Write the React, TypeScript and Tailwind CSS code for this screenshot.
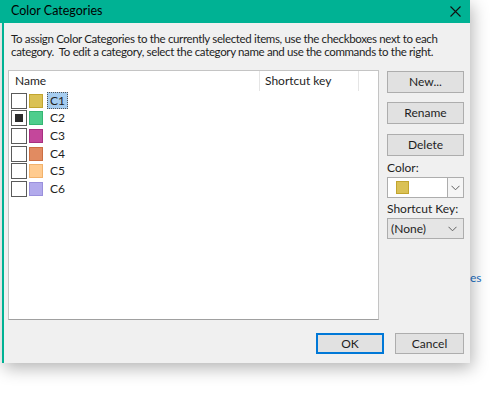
import { useState } from 'react'

const categories = [
  { name: 'C1', fill: '#dac155', edge: '#c2a52f', checked: false },
  { name: 'C2', fill: '#4fcd8d', edge: '#35b673', checked: true },
  { name: 'C3', fill: '#c4479b', edge: '#a82f80', checked: false },
  { name: 'C4', fill: '#e18b61', edge: '#cc6f42', checked: false },
  { name: 'C5', fill: '#ffcb8f', edge: '#f2b26b', checked: false },
  { name: 'C6', fill: '#b2aaec', edge: '#9a90dc', checked: false },
]

const font = { fontFamily: 'Lato, "Noto Sans", sans-serif' }

function Chevron() {
  return (
    <svg width="9" height="6" viewBox="0 0 9 6" fill="none">
      <path d="M0.5 0.8L4.5 4.8L8.5 0.8" stroke="#606060" strokeWidth="1" />
    </svg>
  )
}

function PushButton({ label, className = '' }: { label: string; className?: string }) {
  return (
    <button
      className={
        'h-[22px] w-[77px] shrink-0 border border-[#adadad] bg-[#e1e1e1] text-[12px] leading-none text-[#1e1e1e] ' +
        className
      }
    >
      {label}
    </button>
  )
}

export default function App() {
  const [selected] = useState('C1')

  return (
    <div className="relative h-[400px] w-[495px] overflow-hidden bg-white" style={font}>
      {/* text of the window behind */}
      <span className="absolute left-[470px] top-[269px] text-[12px] text-[#1a6fc4]">es</span>

      {/* ── Dialog ─────────────────────────── */}
      <div className="relative ml-[2px] flex h-[363px] w-[468px] flex-col bg-[#f0f0f0] shadow-[2px_5px_16px_rgba(0,0,0,0.3)]">
        {/* title bar */}
        <div className="-ml-[2px] flex h-[23px] shrink-0 items-center justify-between bg-[#00b294] pl-[11px] pr-[9px]">
          <span className="text-[12.5px] text-black">Color Categories</span>
          <svg width="11" height="11" viewBox="0 0 11 11">
            <path d="M0.5 0.5L10.5 10.5M10.5 0.5L0.5 10.5" stroke="#111" strokeWidth="1.1" />
          </svg>
        </div>

        <div className="flex flex-1 flex-col border-l-2 border-[#00b294] pl-[4px] pr-[6px]">
          {/* description */}
          <p className="mt-[9px] whitespace-nowrap pl-[3px] text-[11.5px] leading-[13px] tracking-[-0.35px] text-[#1e1e1e]">
            To assign Color Categories to the currently selected items, use the checkboxes next to each
            <br />
            category.&nbsp; To edit a category, select the category name and use the commands to the right.
          </p>

          <div className="mt-[12px] flex gap-[8px]">
            {/* list */}
            <div className="h-[250px] w-[371px] border border-[#c4c4c4] border-b-[#a0a0a0] bg-white">
              <div className="flex h-[20px] text-[12px] text-[#1e1e1e]">
                <div className="flex w-[250px] items-center pl-[6px]">Name</div>
                <div className="flex w-[100px] items-center border-x border-[#e5e5e5] pl-[5px]">Shortcut key</div>
              </div>
              <div className="flex flex-col pl-[2px] pt-[1px]">
                {categories.map((c) => (
                  <div key={c.name} className="flex h-[17.6px] items-center">
                    <div className="flex h-[16px] w-[16px] items-center justify-center border border-[#5a5a5a] bg-white">
                      {c.checked && <div className="h-[8px] w-[8px] bg-[#2b2b2b]" />}
                    </div>
                    <div
                      className="ml-[2px] h-[14px] w-[14px] border"
                      style={{ background: c.fill, borderColor: c.edge }}
                    />
                    <div
                      className={
                        'ml-[4px] flex h-[17px] items-center px-[2px] text-[12px] text-[#1e1e1e] ' +
                        (c.name === selected ? 'border border-dotted border-[#555] bg-[#a6cdf0]' : 'border border-transparent')
                      }
                    >
                      {c.name}
                    </div>
                  </div>
                ))}
              </div>
            </div>

            {/* right column */}
            <div className="mt-[1px] flex w-[77px] flex-col">
              <PushButton label="New..." />
              <PushButton label="Rename" className="mt-[9px]" />
              <PushButton label="Delete" className="mt-[10px]" />

              <span className="mt-[4px] text-[12px] leading-[16px] text-[#1e1e1e]">Color:</span>
              <div className="mt-[1px] flex h-[21px] border border-[#adadad] bg-white">
                <div className="flex flex-1 items-center pl-[8px]">
                  <div className="h-[13px] w-[13px] border border-[#c2a52f] bg-[#dac155]" />
                </div>
                <div className="flex w-[16px] items-center justify-center border-l border-[#adadad] bg-[#f5f5f5]">
                  <Chevron />
                </div>
              </div>

              <span className="mt-[3px] text-[12px] leading-[16px] text-[#1e1e1e]">Shortcut Key:</span>
              <div className="mt-[1px] flex h-[21px] items-center justify-between border border-[#adadad] bg-[#e5e5e5] pl-[3px] pr-[6px] text-[12px] text-[#1e1e1e]">
                <span>(None)</span>
                <Chevron />
              </div>
            </div>
          </div>

          {/* footer */}
          <div className="mt-[13px] flex justify-end gap-[11px]">
            <button className="h-[21px] w-[68px] border-2 border-[#0078d7] bg-[#e1e1e1] text-[12px] text-[#1e1e1e]">OK</button>
            <button className="h-[21px] w-[69px] border border-[#adadad] bg-[#e1e1e1] text-[12px] text-[#1e1e1e]">Cancel</button>
          </div>
        </div>
      </div>
    </div>
  )
}
